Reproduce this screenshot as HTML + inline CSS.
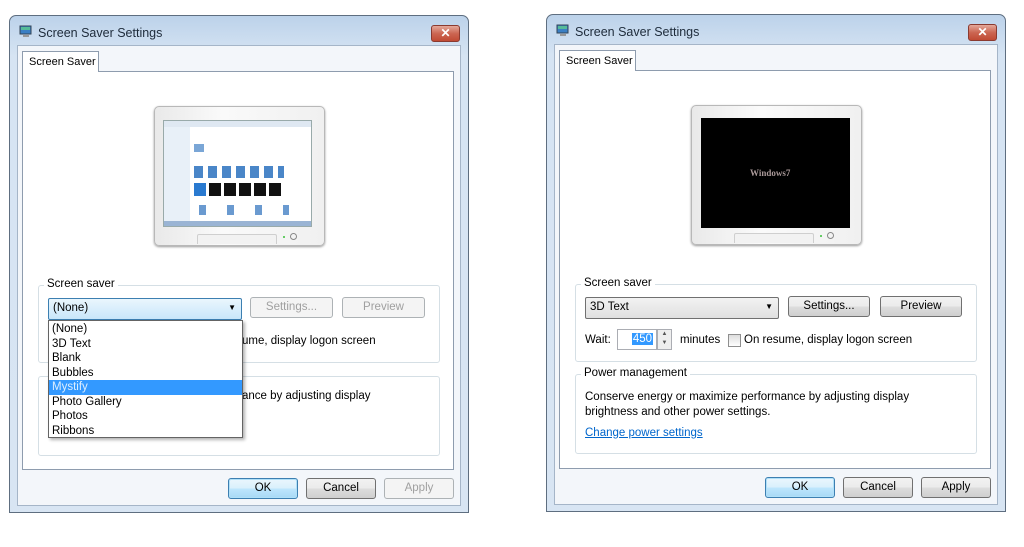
<!DOCTYPE html>
<html><head><meta charset="utf-8"><style>
*{margin:0;padding:0;box-sizing:border-box}
body{width:1024px;height:547px;background:#fff;position:relative;overflow:hidden;font-family:"Liberation Sans",sans-serif;font-size:11.5px;color:#000}
.a{position:absolute;white-space:nowrap}
.win{position:absolute;width:460px;height:498px;border:1px solid #5e6e80;border-radius:7px 7px 0 0;background:linear-gradient(#bcd2ea 0,#d6e4f3 40px,#d8e5f3 100%)}
.inner{position:absolute;left:7px;top:29px;width:444px;height:461px;background:#f3f6fa;border:1px solid #a5b5c8}
.title{position:absolute;left:28px;top:10px;font-size:12.5px;color:#1e2b3a}
.close{position:absolute;left:421px;top:9px;width:29px;height:17px;border:1px solid #8a3a30;border-radius:3px;background:linear-gradient(#e4a89a,#cc6652 50%,#c04a34);color:#fff;font-weight:bold;font-size:12px;text-align:center;line-height:15px}
.icon{position:absolute;left:9px;top:9px;width:14px;height:13px}
.tab{position:absolute;height:21px;border:1px solid #8e9cae;border-bottom:none;background:#fff;padding:4px 6px;font-size:11px;white-space:nowrap}
.pane{position:absolute;width:432px;height:399px;background:#fff;border:1px solid #8e9cae}
.grp{position:absolute;border:1px solid #d5dfe5;border-radius:3px}
.lg{position:absolute;background:#fff;padding:0 3px;top:-8px;left:5px;white-space:nowrap}
.btn{position:absolute;height:21px;border:1px solid #707070;border-radius:3px;background:linear-gradient(#f2f2f2,#ebebeb 50%,#dddddd 51%,#cfcfcf);text-align:center;line-height:19px}
.dis{border-color:#adb2b5;background:#f4f4f4;color:#a0a0a0}
.def{border-color:#3c7fb1;background:linear-gradient(#eaf6fd,#d9f0fc 50%,#bee6fd 51%,#a7d9f5);box-shadow:inset 0 0 0 1px #b0e0f8}
.mon{position:absolute;width:171px;height:140px;border:1px solid #b8b8b8;border-radius:5px;background:linear-gradient(90deg,#e9e9e9,#fafafa 40%,#f0f0f0);box-shadow:0 1px 2px #999}
.stand{position:absolute;left:42px;top:127px;width:80px;height:10px;border:1px solid #cfcfcf;border-bottom:none;border-radius:2px 2px 0 0;background:#f2f2f2}
.led{position:absolute;left:135px;top:126px;width:7px;height:7px;border:1px solid #888;border-radius:50%}
.dot{position:absolute;left:128px;top:129px;width:2px;height:2px;background:#6c6}
</style></head><body>

<div class="win" style="left:9px;top:15px">
 <svg class="icon" viewBox="0 0 14 13"><rect x="1" y="1" width="11" height="8" fill="#3b7fc4" stroke="#345"/><rect x="2" y="2" width="9" height="3" fill="#5b9"/><rect x="4" y="10" width="6" height="2" fill="#999"/></svg>
 <div class="title">Screen Saver Settings</div>
 <div class="close">✕</div>
 <div class="inner"></div>
</div>
<div class="tab" style="left:22px;top:51px;width:77px">Screen Saver</div>
<div class="pane" style="left:22px;top:71px"></div>
<div class="a" style="left:23px;top:71px;width:75px;height:2px;background:#fff"></div>
<div class="mon" style="left:154px;top:106px">
 <div class="a" style="left:8px;top:13px;width:149px;height:107px;background:#fff;border:1px solid #9aa;overflow:hidden">
  <div class="a" style="left:0;top:0;width:149px;height:6px;background:#dfe8f2"></div>
  <div class="a" style="left:0;top:6px;width:26px;height:94px;background:#e8f0f8"></div>
  <div class="a" style="left:30px;top:23px;width:10px;height:8px;background:#7aa6d6"></div>
  <div class="a" style="left:30px;top:45px;width:90px;height:12px;background:repeating-linear-gradient(90deg,#4a86c8 0 9px,#fff 9px 14px)"></div>
  <div class="a" style="left:30px;top:62px;width:90px;height:13px;background:repeating-linear-gradient(90deg,#111 0 12px,#fff 12px 15px)"></div>
  <div class="a" style="left:30px;top:62px;width:12px;height:13px;background:#2a7ad0"></div>
  <div class="a" style="left:35px;top:84px;width:90px;height:10px;background:repeating-linear-gradient(90deg,#6a9ad0 0 7px,#fff 7px 28px)"></div>
  <div class="a" style="left:0;top:100px;width:149px;height:7px;background:#9ab4d4"></div>
 </div>
 <div class="stand"></div><div class="dot"></div><div class="led"></div>
</div>
<div class="grp" style="left:38px;top:285px;width:402px;height:78px"><div class="lg">Screen saver</div></div>
<div class="a" style="left:48px;top:298px;width:194px;height:22px;border:1px solid #3c7fb1;border-radius:2px;background:linear-gradient(#eaf6fd,#c8e6fa);padding:3px 4px">(None)<span class="a" style="right:5px;top:4px;font-size:8px">▼</span></div>
<div class="btn dis" style="left:250px;top:297px;width:83px">Settings...</div>
<div class="btn dis" style="left:342px;top:297px;width:83px">Preview</div>
<div class="a" style="left:242px;top:335px">ume, display logon screen</div>
<div class="grp" style="left:38px;top:376px;width:402px;height:80px"></div>
<div class="a" style="left:242px;top:390px">ance by adjusting display</div>
<div class="a" style="left:48px;top:320px;width:195px;height:118px;border:1px solid #646464;background:#fff;box-shadow:2px 2px 3px rgba(0,0,0,.3);line-height:14.5px;padding-top:1px">
 <div style="padding-left:3px">(None)</div><div style="padding-left:3px">3D Text</div><div style="padding-left:3px">Blank</div><div style="padding-left:3px">Bubbles</div>
 <div style="padding-left:3px;background:#3399ff;color:#dceeff">Mystify</div>
 <div style="padding-left:3px">Photo Gallery</div><div style="padding-left:3px">Photos</div><div style="padding-left:3px">Ribbons</div>
</div>
<div class="btn def" style="left:228px;top:478px;width:70px">OK</div>
<div class="btn" style="left:306px;top:478px;width:70px">Cancel</div>
<div class="btn dis" style="left:384px;top:478px;width:70px">Apply</div>

<div class="win" style="left:546px;top:14px">
 <svg class="icon" viewBox="0 0 14 13"><rect x="1" y="1" width="11" height="8" fill="#3b7fc4" stroke="#345"/><rect x="2" y="2" width="9" height="3" fill="#5b9"/><rect x="4" y="10" width="6" height="2" fill="#999"/></svg>
 <div class="title">Screen Saver Settings</div>
 <div class="close">✕</div>
 <div class="inner"></div>
</div>
<div class="tab" style="left:559px;top:50px;width:77px">Screen Saver</div>
<div class="pane" style="left:559px;top:70px"></div>
<div class="a" style="left:560px;top:70px;width:75px;height:2px;background:#fff"></div>
<div class="mon" style="left:691px;top:105px">
 <div class="a" style="left:9px;top:12px;width:149px;height:110px;background:#000"></div>
 <div class="a" style="left:58px;top:62px;font-size:9px;font-weight:bold;color:#a99;font-family:'Liberation Serif',serif">Windows7</div>
 <div class="stand"></div><div class="dot"></div><div class="led"></div>
</div>
<div class="grp" style="left:575px;top:284px;width:402px;height:78px"><div class="lg">Screen saver</div></div>
<div class="a" style="left:585px;top:297px;width:194px;height:22px;border:1px solid #707070;border-radius:2px;background:linear-gradient(#f2f2f2,#e0e0e0);padding:3px 4px">3D Text<span class="a" style="right:5px;top:4px;font-size:8px">▼</span></div>
<div class="btn" style="left:788px;top:296px;width:82px">Settings...</div>
<div class="btn" style="left:880px;top:296px;width:82px">Preview</div>
<div class="a" style="left:585px;top:334px">Wait:</div>
<div class="a" style="left:617px;top:329px;width:40px;height:21px;border:1px solid #abadb3;background:#fff"><span class="a" style="right:3px;top:3px;background:#3399ff;color:#fff;padding:0 1px">450</span></div>
<div class="a" style="left:657px;top:329px;width:15px;height:21px;border:1px solid #abadb3;background:#eee;font-size:6px;text-align:center;line-height:9px;color:#555">▲<br>▼</div>
<div class="a" style="left:680px;top:334px">minutes</div>
<div class="a" style="left:728px;top:334px;width:13px;height:13px;border:1px solid #8f8f8f;background:linear-gradient(#ddd,#fff)"></div>
<div class="a" style="left:744px;top:334px">On resume, display logon screen</div>
<div class="grp" style="left:575px;top:374px;width:402px;height:80px"><div class="lg">Power management</div></div>
<div class="a" style="left:585px;top:390px;line-height:14.5px">Conserve energy or maximize performance by adjusting display<br>brightness and other power settings.</div>
<div class="a" style="left:585px;top:427px;color:#0066cc;text-decoration:underline">Change power settings</div>
<div class="btn def" style="left:765px;top:477px;width:70px">OK</div>
<div class="btn" style="left:843px;top:477px;width:70px">Cancel</div>
<div class="btn" style="left:921px;top:477px;width:70px">Apply</div>
</body></html>
